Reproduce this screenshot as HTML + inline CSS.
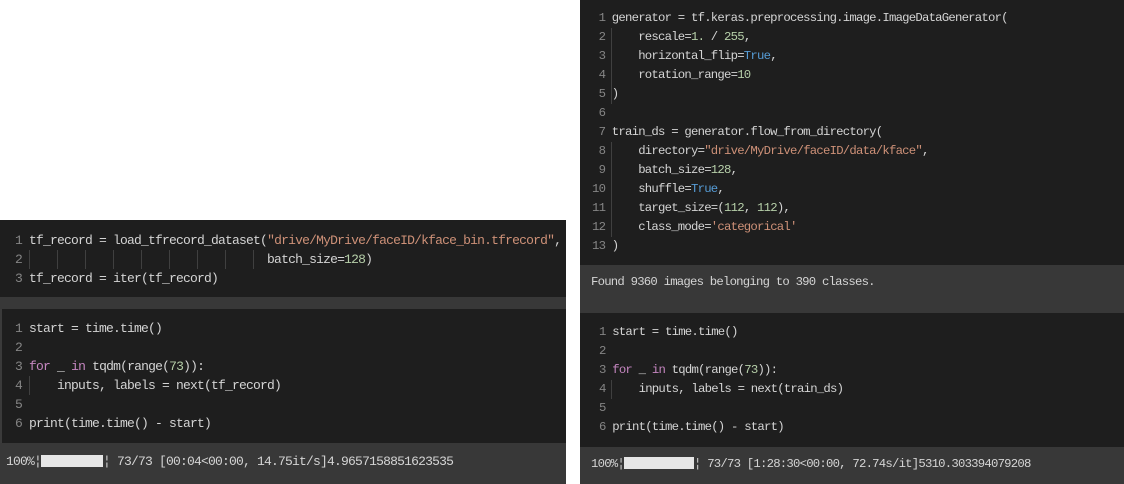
<!DOCTYPE html>
<html><head><meta charset="utf-8"><style>
*{margin:0;padding:0;box-sizing:border-box}
body{width:1124px;height:484px;background:#fff;position:relative;overflow:hidden;font-family:"Liberation Mono",monospace;color:#d4d4d4}
.b{position:absolute}
.code{background:#1e1e1e}
.out{background:#383838}
.l{position:absolute;white-space:pre;line-height:19px}
.n{color:#858585}
.k{color:#c586c0}.d{color:#b5cea8}.s{color:#ce9178}.t{color:#569cd6}.f{color:#dcdcaa}
.L{font-size:13px;letter-spacing:-0.8px}
.R{font-size:12.3px;letter-spacing:-0.78px}
.g{position:absolute;width:1px;background:#404040}
.bar{display:inline-block;background:#e6e6e6;height:12px;vertical-align:-2px}
</style></head><body>
<!-- left -->
<div class="b code" style="left:0;top:220px;width:566px;height:77px"></div>
<div class="b out" style="left:0;top:297px;width:566px;height:12px"></div>
<div class="b code" style="left:0;top:309px;width:566px;height:134px;border-left:2px solid #3a3a3a"></div>
<div class="b out" style="left:0;top:443px;width:566px;height:41px"></div>
<div class="L">
<div class="l" style="left:15px;top:231px"><span class="n">1</span> tf_record = load_tfrecord_dataset(<span class="s">"drive/MyDrive/faceID/kface_bin.tfrecord"</span>,</div>
<div class="l" style="left:15px;top:250px"><span class="n">2</span>                                   batch_size=<span class="d">128</span>)</div>
<div class="l" style="left:15px;top:269px"><span class="n">3</span> tf_record = iter(tf_record)</div>
<div class="l" style="left:15px;top:319px"><span class="n">1</span> start = time.time()</div>
<div class="l" style="left:15px;top:338px"><span class="n">2</span></div>
<div class="l" style="left:15px;top:357px"><span class="n">3</span> <span class="k">for</span> _ <span class="k">in</span> tqdm(range(<span class="d">73</span>)):</div>
<div class="l" style="left:15px;top:376px"><span class="n">4</span>     inputs, labels = next(tf_record)</div>
<div class="l" style="left:15px;top:395px"><span class="n">5</span></div>
<div class="l" style="left:15px;top:414px"><span class="n">6</span> print(time.time() - start)</div>
<div class="l" style="left:6px;top:452px">100%¦<span class="bar" style="width:62px"></span>¦ 73/73 [00:04&lt;00:00, 14.75it/s]4.9657158851623535</div>
</div>
<div class="g" style="left:29px;top:250px;height:19px"></div><div class="g" style="left:57px;top:250px;height:19px"></div><div class="g" style="left:85px;top:250px;height:19px"></div><div class="g" style="left:113px;top:250px;height:19px"></div><div class="g" style="left:141px;top:250px;height:19px"></div><div class="g" style="left:169px;top:250px;height:19px"></div><div class="g" style="left:197px;top:250px;height:19px"></div><div class="g" style="left:225px;top:250px;height:19px"></div><div class="g" style="left:253px;top:250px;height:19px"></div>
<div class="g" style="left:29px;top:376px;height:19px"></div>
<!-- right -->
<div class="b code" style="left:580px;top:0;width:544px;height:265px"></div>
<div class="b out" style="left:580px;top:265px;width:544px;height:48px"></div>
<div class="b code" style="left:580px;top:313px;width:544px;height:134px"></div>
<div class="b out" style="left:580px;top:447px;width:544px;height:37px"></div>
<div class="R">
<div class="l" style="left:592px;top:9px"><span class="n"> 1</span> generator = tf.keras.preprocessing.image.ImageDataGenerator(</div>
<div class="l" style="left:592px;top:28px"><span class="n"> 2</span>     rescale=<span class="d">1.</span> / <span class="d">255</span>,</div>
<div class="l" style="left:592px;top:47px"><span class="n"> 3</span>     horizontal_flip=<span class="t">True</span>,</div>
<div class="l" style="left:592px;top:66px"><span class="n"> 4</span>     rotation_range=<span class="d">10</span></div>
<div class="l" style="left:592px;top:85px"><span class="n"> 5</span> )</div>
<div class="l" style="left:592px;top:104px"><span class="n"> 6</span></div>
<div class="l" style="left:592px;top:123px"><span class="n"> 7</span> train_ds = generator.flow_from_directory(</div>
<div class="l" style="left:592px;top:142px"><span class="n"> 8</span>     directory=<span class="s">"drive/MyDrive/faceID/data/kface"</span>,</div>
<div class="l" style="left:592px;top:161px"><span class="n"> 9</span>     batch_size=<span class="d">128</span>,</div>
<div class="l" style="left:592px;top:180px"><span class="n">10</span>     shuffle=<span class="t">True</span>,</div>
<div class="l" style="left:592px;top:199px"><span class="n">11</span>     target_size=(<span class="d">112</span>, <span class="d">112</span>),</div>
<div class="l" style="left:592px;top:218px"><span class="n">12</span>     class_mode=<span class="s">'categorical'</span></div>
<div class="l" style="left:592px;top:237px"><span class="n">13</span> )</div>
<div class="l" style="left:591px;top:273px">Found 9360 images belonging to 390 classes.</div>
<div class="l" style="left:599px;top:323px"><span class="n">1</span> start = time.time()</div>
<div class="l" style="left:599px;top:342px"><span class="n">2</span></div>
<div class="l" style="left:599px;top:361px"><span class="n">3</span> <span class="k">for</span> _ <span class="k">in</span> tqdm(range(<span class="d">73</span>)):</div>
<div class="l" style="left:599px;top:380px"><span class="n">4</span>     inputs, labels = next(train_ds)</div>
<div class="l" style="left:599px;top:399px"><span class="n">5</span></div>
<div class="l" style="left:599px;top:418px"><span class="n">6</span> print(time.time() - start)</div>
<div class="l" style="left:591px;top:455px">100%¦<span class="bar" style="width:70px"></span>¦ 73/73 [1:28:30&lt;00:00, 72.74s/it]5310.303394079208</div>
</div>
<div class="g" style="left:611px;top:28px;height:76px"></div>
<div class="g" style="left:611px;top:142px;height:95px"></div>
<div class="g" style="left:611px;top:380px;height:19px"></div>
</body></html>
